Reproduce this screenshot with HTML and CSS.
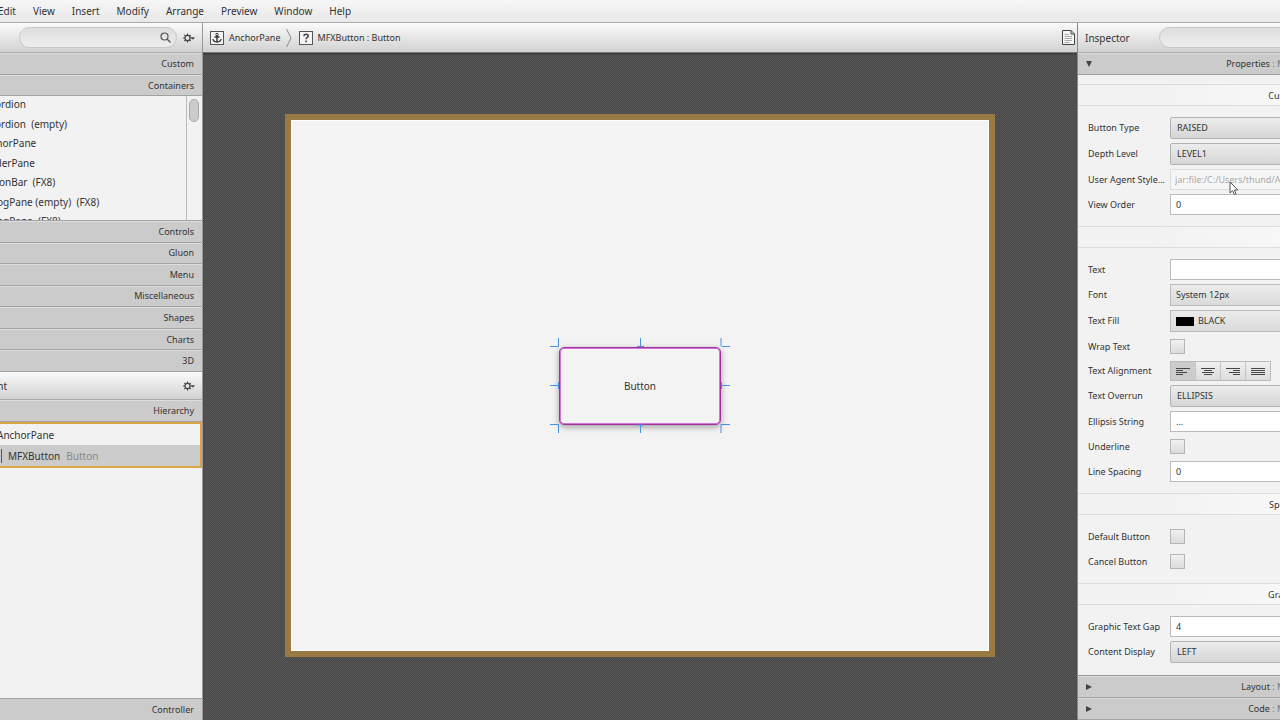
FILE: index.html
```html
<!DOCTYPE html>
<html lang="en">
<head>
<meta charset="utf-8">
<title>Scene Builder</title>
<link rel="stylesheet" href="styles.css">
</head>
<body>
<svg class="defs" aria-hidden="true">
  <symbol id="gear" viewBox="0 0 12 10">
    <circle cx="4.500" cy="5" r="2.600" fill="none" stroke="#444" stroke-width="1.300"/>
    <path d="M4.500 0.600v1.600M4.500 7.800v1.600M0.100 5h1.600M7.300 5h1.600M1.400 1.900l1.100 1.100M6.500 7l1.100 1.100M7.600 1.900l-1.100 1.100M2.500 7l-1.100 1.100" stroke="#444" stroke-width="1.200"/>
    <path d="M8 4.200h4l-2 2.600z" fill="#444"/>
  </symbol>
</svg>
<div class="app">
  <nav class="menubar">
    <button>Edit</button><button>View</button><button>Insert</button><button>Modify</button><button>Arrange</button><button>Preview</button><button>Window</button><button>Help</button>
  </nav>
  <div class="workspace">
    <aside class="sidebar">
      <div class="toolbar library-bar">
        <div class="search">
          <input type="search" aria-label="Search library">
          <svg width="11" height="11" viewBox="0 0 11 11"><circle cx="4.500" cy="4.500" r="3.500" fill="none" stroke="#555" stroke-width="1.200"/><path d="M7 7l3.500 3.500" stroke="#555" stroke-width="1.400"/></svg>
        </div>
        <button class="gear" aria-label="Library options"><svg width="12" height="10"><use href="#gear"/></svg></button>
      </div>
      <button class="section">Custom</button>
      <button class="section expanded">Containers</button>
      <div class="library">
        <ul class="items">
          <li>Accordion</li>
          <li>Accordion&nbsp; (empty)</li>
          <li>AnchorPane</li>
          <li>BorderPane</li>
          <li>ButtonBar&nbsp; (FX8)</li>
          <li>DialogPane (empty)&nbsp; (FX8)</li>
          <li>DialogPane&nbsp; (FX8)</li>
        </ul>
        <div class="scroll"><div class="thumb"></div></div>
      </div>
      <div class="stack">
        <button class="section">Controls</button>
        <button class="section">Gluon</button>
        <button class="section">Menu</button>
        <button class="section">Miscellaneous</button>
        <button class="section">Shapes</button>
        <button class="section">Charts</button>
        <button class="section">3D</button>
      </div>
      <div class="toolbar document-bar">
        <h2>Document</h2>
        <button class="gear" aria-label="Document options"><svg width="12" height="10"><use href="#gear"/></svg></button>
      </div>
      <button class="section">Hierarchy</button>
      <ul class="tree">
        <li class="root">AnchorPane</li>
        <li class="selected"><span class="node-icon"></span>MFXButton<span class="info">Button</span></li>
      </ul>
      <div class="rest"></div>
      <button class="section last">Controller</button>
    </aside>
    <main class="content">
      <div class="toolbar crumbs">
        <svg width="14" height="14" viewBox="0 0 14 14"><rect x="0.500" y="0.500" width="13" height="13" fill="#f4f4f4" stroke="#555"/><circle cx="7" cy="3.500" r="1.200" fill="none" stroke="#333"/><path d="M7 4.500v6M4.500 6h5M3 8c.3 2 2 3 4 3s3.700-1 4-3" fill="none" stroke="#333" stroke-width="1.400"/></svg>
        <span>AnchorPane</span>
        <svg class="chevron" width="6" height="18" viewBox="0 0 6 18"><path d="M.5 0l4.500 9-4.500 9" fill="none" stroke="#888"/></svg>
        <svg width="14" height="14" viewBox="0 0 14 14"><rect x="0.500" y="0.500" width="13" height="13" fill="#f4f4f4" stroke="#555"/><path d="M5 5.200c0-2.600 4.200-2.400 4.200-.2 0 1.500-2.100 1.500-2.100 3.300M7.100 9.500v1.700" fill="none" stroke="#444" stroke-width="1.600"/></svg>
        <span>MFXButton : Button</span>
        <svg class="doc" width="13" height="15" viewBox="0 0 13 15"><path d="M.5.5h8.500l3.500 3.500v10.500H.5z" fill="#f6f6f6" stroke="#444"/><path d="M9 .5v3.500h3.500" fill="none" stroke="#444"/><path d="M2.500 4.500h4.500M2.500 6.500h7.500M2.500 8.500h7.500M2.500 10.500h7.500M2.500 12.500h5" stroke="#aaa"/></svg>
      </div>
      <div class="canvas">
        <div class="frame">
          <div class="selection">
            <button class="mfx">Button</button>
            <svg class="handles" width="180" height="97" viewBox="0 0 180 97"><path d="M0 9.500h8.500V1M90.500 1v8.500M87 9.500h7M171 1v8.500M172 9.500h8M0 48.500h9M8.500 45v7M171 48.500h9M171.500 45v7M0 87.500h8.500V96M87 88h7M90.500 88v8M171 96v-8.500h9" fill="none" stroke="#4a90e2"/></svg>
          </div>
        </div>
      </div>
    </main>
    <aside class="inspector">
      <div class="sheet">
        <div class="toolbar inspector-bar"><h2>Inspector</h2><input type="search" aria-label="Search inspector"></div>
        <button class="section prop"><i class="open"></i><span>Properties <em>: MFXButton</em></span></button>
        <div class="fields">
          <h3>Custom</h3>
          <div class="group">
            <label for="type">Button Type</label><select id="type"><option>RAISED</option></select>
            <label for="depth">Depth Level</label><select id="depth"><option>LEVEL1</option></select>
            <label for="agent">User Agent Style...</label><input id="agent" type="text" value="jar:file:/C:/Users/thund/AppData" disabled>
            <label for="order">View Order</label><input id="order" type="text" value="0">
          </div>
          <h3>Text</h3>
          <div class="group">
            <label for="text">Text</label><input id="text" type="text">
            <label for="font">Font</label><button id="font" class="picker">System 12px</button>
            <label for="fill">Text Fill</label><button id="fill" class="picker"><span class="swatch"></span>BLACK</button>
            <label for="wrap">Wrap Text</label><input id="wrap" type="checkbox">
            <span class="label">Text Alignment</span>
            <div class="align" role="group" aria-label="Text Alignment">
              <button class="on" aria-label="Left"><svg width="16" height="8"><path d="M1 1.500h14M1 3.500h7M1 5.500h11M1 7.500h7" stroke="#444"/></svg></button>
              <button aria-label="Center"><svg width="16" height="8"><path d="M1 1.500h14M4 3.500h8M2 5.500h12M4 7.500h8" stroke="#444"/></svg></button>
              <button aria-label="Right"><svg width="16" height="8"><path d="M1 1.500h14M8 3.500h7M4 5.500h11M8 7.500h7" stroke="#444"/></svg></button>
              <button aria-label="Justify"><svg width="16" height="8"><path d="M1 1.500h14M1 3.500h14M1 5.500h14M1 7.500h14" stroke="#444"/></svg></button>
            </div>
            <label for="overrun">Text Overrun</label><select id="overrun"><option>ELLIPSIS</option></select>
            <label for="ellipsis">Ellipsis String</label><input id="ellipsis" type="text" value="...">
            <label for="underline">Underline</label><input id="underline" type="checkbox">
            <label for="spacing">Line Spacing</label><input id="spacing" type="text" value="0">
          </div>
          <h3>Specific</h3>
          <div class="group">
            <label for="default">Default Button</label><input id="default" type="checkbox">
            <label for="cancel">Cancel Button</label><input id="cancel" type="checkbox">
          </div>
          <h3>Graphic</h3>
          <div class="group">
            <label for="gap">Graphic Text Gap</label><input id="gap" type="text" value="4">
            <label for="display">Content Display</label><select id="display"><option>LEFT</option></select>
          </div>
        </div>
        <button class="section prop"><i></i><span>Layout <em>: MFXButton</em></span></button>
        <button class="section prop"><i></i><span>Code <em>: MFXButton</em></span></button>
      </div>
    </aside>
  </div>
</div>
<svg class="pointer" width="10" height="15" viewBox="0 0 10 15"><path d="M1 1v11l2.600-2.400 1.800 4 1.700-.8-1.800-3.800h3.500z" fill="#fff" stroke="#555"/></svg>
</body>
</html>
```

FILE: styles.css
```css
* { box-sizing: border-box; }
body, ul, h2, h3 { margin: 0; padding: 0; }
body {
  height: 100vh;
  overflow: hidden;
  font: 9px/14px "Noto Sans", "Open Sans", sans-serif;
  color: #333;
}
ul { list-style: none; }
button, input, select { font: inherit; color: inherit; margin: 0; border-radius: 0; }
button { padding: 0; border: 0; background: none; }
h2 { font-size: 10px; font-weight: 400; }
.defs { position: absolute; width: 0; height: 0; }

.app { display: flex; flex-direction: column; height: 100%; }
.menubar {
  flex: none;
  display: flex;
  gap: 17px;
  height: 23px;
  margin-left: -2px;
  border-bottom: 1px solid #aaa;
  background: linear-gradient(#f6f6f6, #e8e8e8);
  font-size: 10px;
}
.workspace { flex: 1; min-height: 0; display: grid; grid-template-columns: 203px 1fr 203px; }
.toolbar {
  flex: none;
  display: flex;
  align-items: center;
  height: 30px;
  border-bottom: 1px solid #aaa;
  background: linear-gradient(#fafafa, #d2d2d2);
}

.sidebar {
  display: flex;
  flex-direction: column;
  min-height: 0;
  overflow: hidden;
  border-right: 1px solid #999;
  background: #f2f2f2;
}
.library-bar { justify-content: flex-end; gap: 6px; padding-right: 7px; }
.search {
  display: flex;
  align-items: center;
  width: 158px;
  height: 21px;
  padding-right: 5px;
  border: 1px solid #c6c6c6;
  border-radius: 11px;
  background: linear-gradient(#dedede, #eee);
}
.search input { flex: 1; min-width: 0; border: 0; background: none; outline: 0; }
.gear { display: flex; }
.section {
  flex: none;
  display: flex;
  align-items: center;
  justify-content: flex-end;
  width: 100%;
  height: 22px;
  padding-right: 8px;
  border-top: 1px solid #ddd;
  border-bottom: 1px solid #a2a2a2;
  background: #cbcbcb;
}
.expanded { height: 21px; }
.library { flex: none; display: flex; height: 124px; overflow: hidden; }
.items { flex: 1; min-width: 0; margin: -1px 0 0 -21px; font-size: 10px; line-height: 19px; white-space: nowrap; }
.items li { height: 20px; }
.items li:nth-child(even) { height: 19px; }
.scroll { width: 16px; padding: 3px 2px; border-left: 1px solid #bbb; }
.thumb { height: 23px; width: 10px; border: 1px solid #a8a8a8; border-radius: 5px; background: #ccc; }
.stack { flex: none; display: grid; grid-template-rows: repeat(7, 1fr); height: 152px; border-top: 1px solid #a2a2a2; }
.stack .section { height: auto; }
.document-bar { height: 28px; justify-content: space-between; padding-right: 7px; margin-left: -42px; }
.tree { flex: none; border: 2px solid #daa545; border-left: 0; font-size: 10px; }
.tree li { display: flex; align-items: center; height: 21px; }
.root { margin-left: -3px; }
.selected { background: #cbcbcb; }
.node-icon { width: 2px; height: 14px; margin-right: 6px; border-right: 1px solid #555; }
.info { margin-left: 6px; color: #888; }
.rest { flex: 1; }
.last { border-top-color: #a2a2a2; border-bottom: 0; }

.content { display: flex; flex-direction: column; min-width: 0; }
.crumbs { gap: 5px; padding: 0 2px 0 7px; border-bottom-color: #777; }
.chevron { margin-right: 2px; }
.doc { margin-left: auto; }
.canvas {
  flex: 1;
  display: flex;
  align-items: center;
  justify-content: center;
  padding-bottom: 2px;
  background: repeating-conic-gradient(#494949 0 25%, #575757 0 50%) 0 0 / 2px 2px;
  box-shadow: inset 0 2px 2px -1px #333;
}
.frame {
  display: flex;
  align-items: center;
  justify-content: center;
  width: 710px;
  height: 543px;
  border: 6px solid #9a7a42;
  outline: 1px solid #fff;
  outline-offset: -7px;
  background: #f3f3f3;
}
.selection { position: relative; }
.mfx {
  display: block;
  width: 162px;
  height: 78px;
  border: 1px solid #a2309f;
  border-radius: 5px;
  background: #f3f3f3;
  box-shadow: inset 0 0 0 1px #d273dc, 0 2px 6px rgba(0, 0, 0, .35);
  font-size: 10px;
}
.handles { position: absolute; left: -9px; top: -10px; }

.inspector { overflow: hidden; border-left: 1px solid #888; background: #f2f2f2; }
.sheet { display: flex; flex-direction: column; width: 264px; height: 100%; }
.inspector-bar { gap: 29px; padding-left: 7px; }
.inspector-bar input {
  flex: 1;
  min-width: 0;
  height: 21px;
  border: 1px solid #c6c6c6;
  border-radius: 11px;
  background: linear-gradient(#dedede, #eee);
}
.prop { justify-content: space-between; padding: 0 18px 0 8px; }
.prop em { font-style: normal; color: #777; }
.prop i { border-left: 6px solid #444; border-top: 3px solid transparent; border-bottom: 3px solid transparent; }
.prop .open { border: 0; border-top: 6px solid #444; border-left: 3px solid transparent; border-right: 3px solid transparent; }
.fields { flex: 1; min-height: 0; padding-top: 9px; border-bottom: 1px solid #999; }
h3 {
  height: 22px;
  padding-right: 41px;
  border-top: 1px solid #ddd;
  border-bottom: 1px solid #ddd;
  background: linear-gradient(90deg, #f2f2f2 30%, #fafafa);
  font-size: 9px;
  font-weight: 400;
  line-height: 22px;
  text-align: right;
}
.group { display: grid; grid-template-columns: 82px 1fr; align-items: center; gap: 4px 0; padding: 11px 0 11px 10px; }
label, .label { white-space: nowrap; }
.group input[type=text], .picker {
  width: 100%;
  height: 21px;
  padding: 0 5px;
  border: 1px solid #bbb;
  background: #fff;
  text-align: left;
}
.group input:disabled { color: #aaa; border-color: #ddd; background: #f6f6f6; padding: 0 4px; }
.group select {
  appearance: none;
  width: 100%;
  height: 22px;
  padding: 0 6px;
  border: 1px solid #b2b2b2;
  border-radius: 2px;
  background: linear-gradient(#ececec, #d6d6d6);
}
.group .picker { display: flex; align-items: center; height: 22px; background: linear-gradient(#ececec, #dadada); }
.swatch { width: 18px; height: 9px; margin-right: 4px; background: #000; }
.group input[type=checkbox] {
  appearance: none;
  width: 15px;
  height: 15px;
  margin: 3px 0;
  border: 1px solid #b5b5b5;
  background: linear-gradient(#f0f0f0, #dcdcdc);
}
.align { display: flex; width: 101px; height: 20px; border: 1px solid #bbb; }
.align button {
  flex: 1;
  display: flex;
  align-items: center;
  justify-content: center;
  border-right: 1px solid #c4c4c4;
  background: linear-gradient(#f0f0f0, #dcdcdc);
}
.align button:last-child { border-right: 0; }
.align .on { background: #ccc; }
.pointer { position: absolute; left: 1229px; top: 181px; }
```
